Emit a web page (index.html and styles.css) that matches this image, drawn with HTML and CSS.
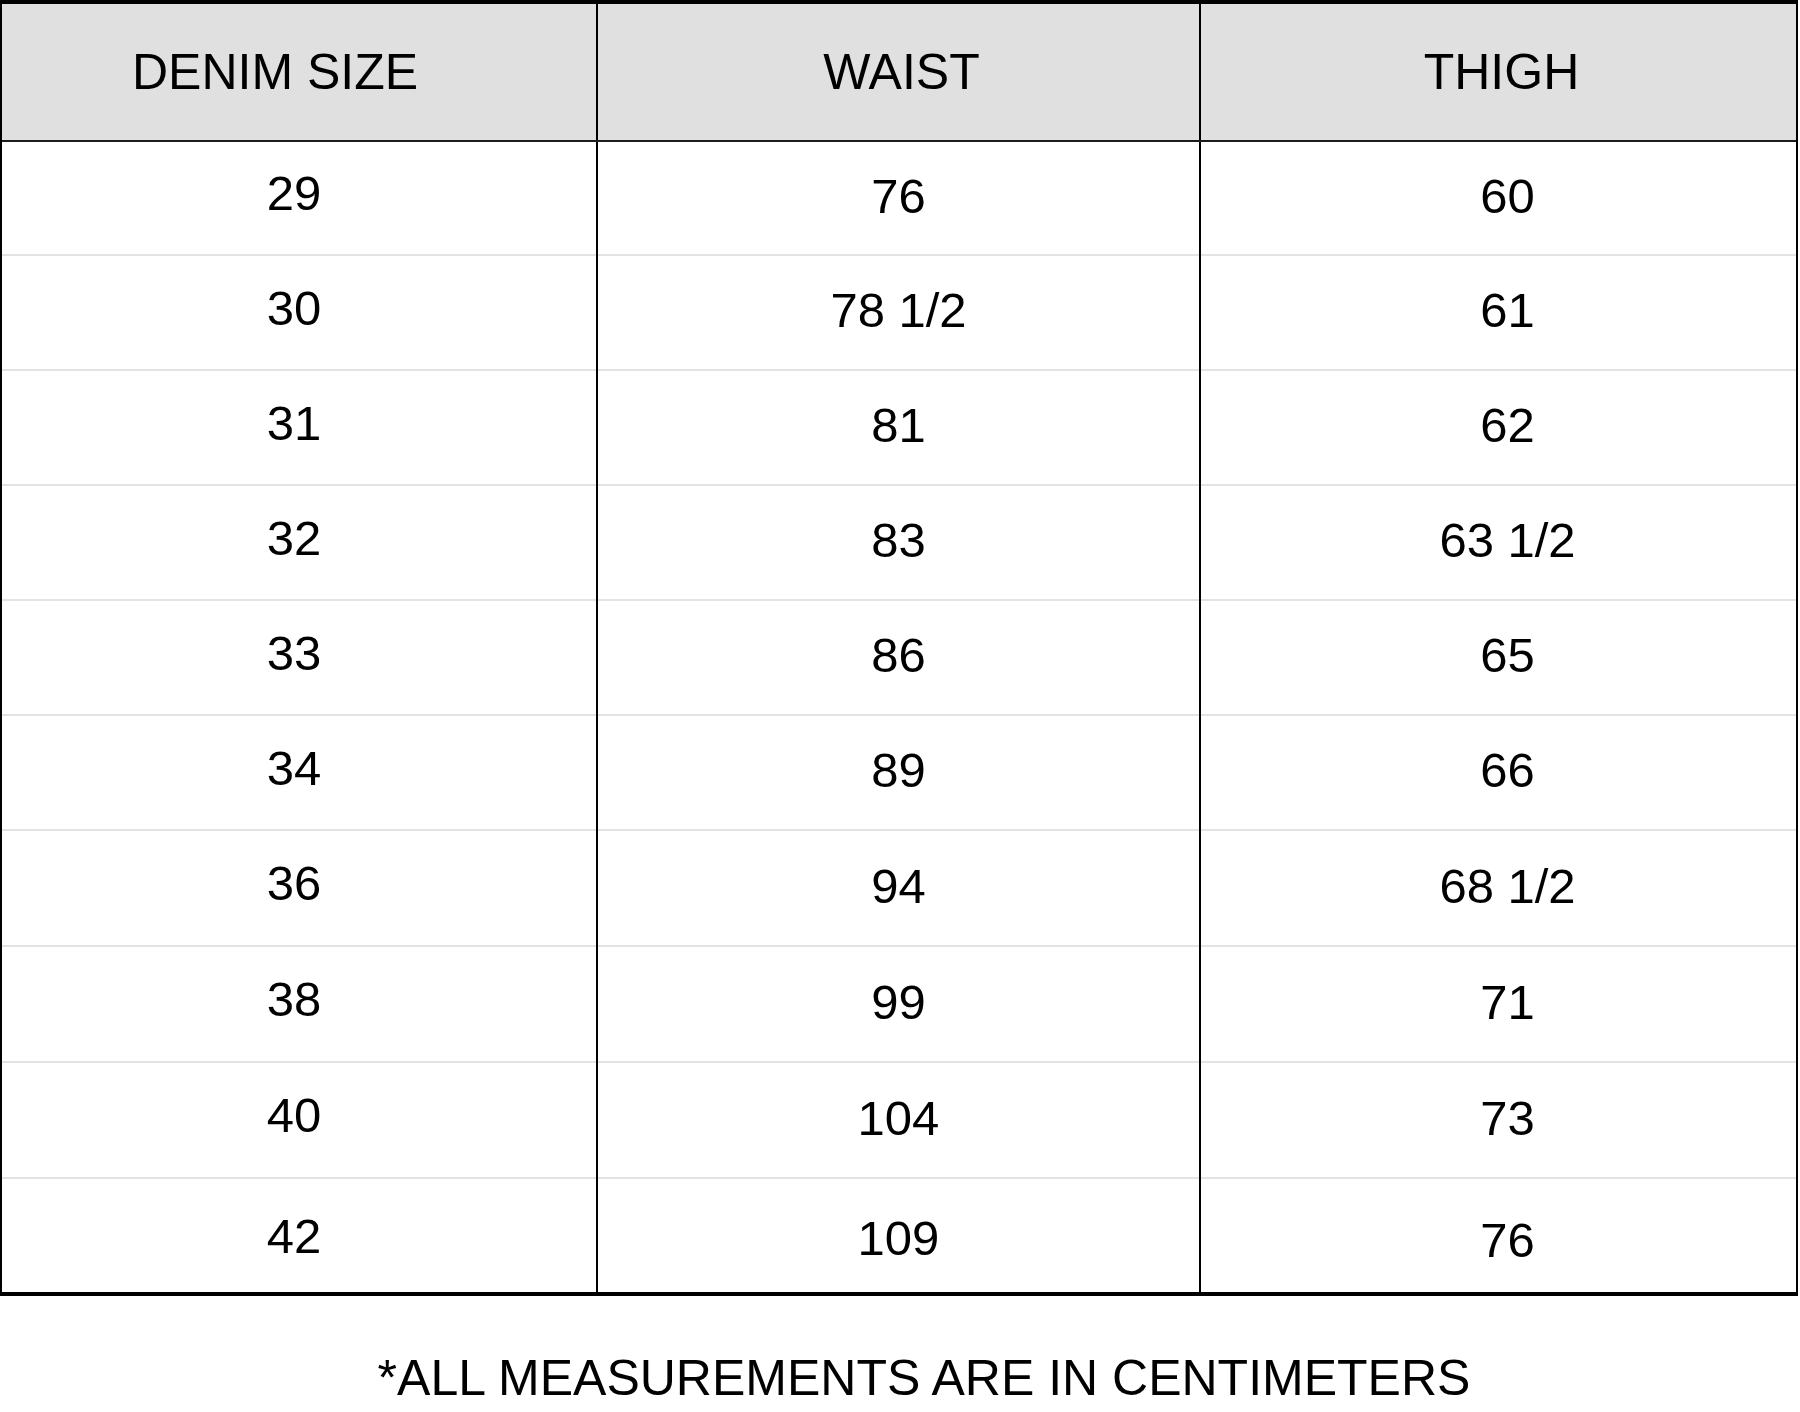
FILE: index.html
```html
<!DOCTYPE html>
<html lang="en">
<head>
<meta charset="utf-8">
<title>Denim Size Chart</title>
<link rel="stylesheet" href="styles.css">
</head>
<body>
<div class="chart">
  <div class="row head">
    <div class="cell c1">DENIM SIZE</div>
    <div class="cell c2">WAIST</div>
    <div class="cell c3">THIGH</div>
  </div>
  <div class="row"><div class="cell c1">29</div><div class="cell c2">76</div><div class="cell c3">60</div></div>
  <div class="row"><div class="cell c1">30</div><div class="cell c2">78 1/2</div><div class="cell c3">61</div></div>
  <div class="row"><div class="cell c1">31</div><div class="cell c2">81</div><div class="cell c3">62</div></div>
  <div class="row"><div class="cell c1">32</div><div class="cell c2">83</div><div class="cell c3">63 1/2</div></div>
  <div class="row"><div class="cell c1">33</div><div class="cell c2">86</div><div class="cell c3">65</div></div>
  <div class="row"><div class="cell c1">34</div><div class="cell c2">89</div><div class="cell c3">66</div></div>
  <div class="row tall"><div class="cell c1">36</div><div class="cell c2">94</div><div class="cell c3">68 1/2</div></div>
  <div class="row tall"><div class="cell c1">38</div><div class="cell c2">99</div><div class="cell c3">71</div></div>
  <div class="row tall"><div class="cell c1">40</div><div class="cell c2">104</div><div class="cell c3">73</div></div>
  <div class="row last"><div class="cell c1">42</div><div class="cell c2">109</div><div class="cell c3">76</div></div>
</div>
<p class="note">*ALL MEASUREMENTS ARE IN CENTIMETERS</p>
</body>
</html>
```

FILE: styles.css
```css
html, body {
  margin: 0;
  padding: 0;
  background: #ffffff;
}

body {
  font-family: "Liberation Sans", Arial, sans-serif;
  color: #000000;
}

.chart {
  box-sizing: border-box;
  width: 1798px;
  border-top: 4px solid #000000;
  border-left: 2px solid #000000;
  border-right: 2px solid #000000;
  border-bottom: 4px solid #000000;
}

.row {
  display: grid;
  grid-template-columns: 596px 603px 595px;
  height: 115px;
}

.row:nth-child(2) {
  height: 114px;
}

.row.tall {
  height: 116px;
}

.row.last {
  height: 113px;
}

.row.head {
  height: 138px;
  background: #e0e0e0;
  border-bottom: 2px solid #1c1c1c;
  box-sizing: border-box;
}

.cell {
  box-sizing: border-box;
  display: flex;
  align-items: center;
  justify-content: center;
  font-size: 49px;
  white-space: nowrap;
  padding-bottom: 7px;
  box-shadow: inset 0 -2px 0 #e3e3e3;
}

.last .cell {
  box-shadow: none;
  padding-bottom: 0;
  padding-top: 4px;
}

.c1, .c2 {
  border-right: 2px solid #000000;
}

.c1 {
  padding-right: 10px;
  padding-bottom: 12px;
}

.last .c1 {
  padding-top: 0;
}

.c3 {
  padding-left: 18px;
}

.last .c3 {
  padding-top: 8px;
}

.head .cell {
  font-size: 50px;
  box-shadow: none;
  padding-bottom: 0;
}

.head .c1 {
  padding-right: 48px;
}

.head .c2 {
  padding-left: 6px;
}

.head .c3 {
  padding-left: 6px;
}

.note {
  margin: 53px 0 0 0;
  padding-left: 48px;
  text-align: center;
  font-size: 50px;
  line-height: normal;
}
```
